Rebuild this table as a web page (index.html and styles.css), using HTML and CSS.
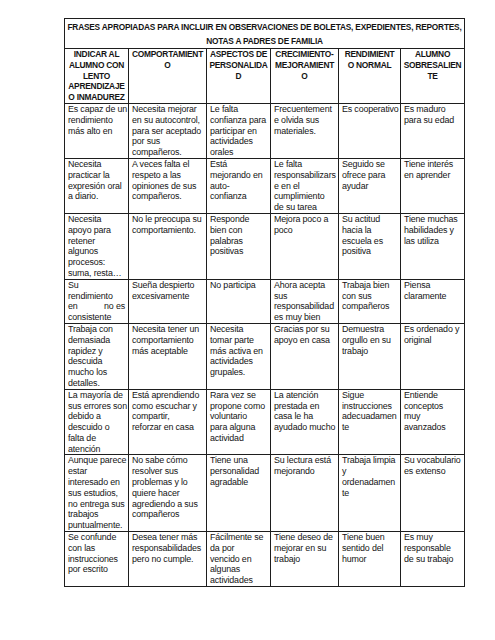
FILE: index.html
```html
<!DOCTYPE html>
<html lang="es">
<head>
<meta charset="utf-8">
<title>Frases apropiadas</title>
<link rel="stylesheet" href="styles.css">
</head>
<body>
<table class="frases">
  <colgroup>
    <col class="c1"><col class="c2"><col class="c3"><col class="c4"><col class="c5"><col class="c6">
  </colgroup>
  <thead>
    <tr class="title-row">
      <th colspan="6" class="title">FRASES APROPIADAS PARA INCLUIR EN OBSERVACIONES DE BOLETAS, EXPEDIENTES, REPORTES,<br>NOTAS A PADRES DE FAMILIA</th>
    </tr>
    <tr class="head-row">
      <th>INDICAR AL<br>ALUMNO CON<br>LENTO<br>APRENDIZAJE<br>O INMADUREZ</th>
      <th>COMPORTAMIENT<br>O</th>
      <th>ASPECTOS DE<br>PERSONALIDA<br>D</th>
      <th>CRECIMIENTO-<br>MEJORAMIENT<br>O</th>
      <th>RENDIMIENT<br>O NORMAL</th>
      <th>ALUMNO<br>SOBRESALIEN<br>TE</th>
    </tr>
  </thead>
  <tbody>
    <tr>
      <td>Es capaz de un<br>rendimiento<br>más alto en</td>
      <td>Necesita mejorar<br>en su autocontrol,<br>para ser aceptado<br>por sus<br>compañeros.</td>
      <td>Le falta<br>confianza para<br>participar en<br>actividades<br>orales</td>
      <td>Frecuentement<br>e olvida sus<br>materiales.</td>
      <td>Es cooperativo</td>
      <td>Es maduro<br>para su edad</td>
    </tr>
    <tr>
      <td>Necesita<br>practicar la<br>expresión oral<br>a diario.</td>
      <td>A veces falta el<br>respeto a las<br>opiniones de sus<br>compañeros.</td>
      <td>Está<br>mejorando en<br>auto-<br>confianza</td>
      <td>Le falta<br>responsabilizars<br>e en el<br>cumplimiento<br>de su tarea</td>
      <td>Seguido se<br>ofrece para<br>ayudar</td>
      <td>Tiene interés<br>en aprender</td>
    </tr>
    <tr>
      <td>Necesita<br>apoyo para<br>retener<br>algunos<br>procesos:<br>suma, resta…</td>
      <td>No le preocupa su<br>comportamiento.</td>
      <td>Responde<br>bien con<br>palabras<br>positivas</td>
      <td>Mejora poco a<br>poco</td>
      <td>Su actitud<br>hacia la<br>escuela es<br>positiva</td>
      <td>Tiene muchas<br>habilidades y<br>las utiliza</td>
    </tr>
    <tr>
      <td>Su<br>rendimiento<br><span class="just"><span>en</span><span>no es</span></span>consistente</td>
      <td>Sueña despierto<br>excesivamente</td>
      <td>No participa</td>
      <td>Ahora acepta<br>sus<br>responsabilidad<br>es muy bien</td>
      <td>Trabaja bien<br>con sus<br>compañeros</td>
      <td>Piensa<br>claramente</td>
    </tr>
    <tr>
      <td>Trabaja con<br>demasiada<br>rapidez y<br>descuida<br>mucho los<br>detalles.</td>
      <td>Necesita tener un<br>comportamiento<br>más aceptable</td>
      <td>Necesita<br>tomar parte<br>más activa en<br>actividades<br>grupales.</td>
      <td>Gracias por su<br>apoyo en casa</td>
      <td>Demuestra<br>orgullo en su<br>trabajo</td>
      <td>Es ordenado y<br>original</td>
    </tr>
    <tr>
      <td>La mayoría de<br>sus errores son<br>debido a<br>descuido o<br>falta de<br>atención</td>
      <td>Está aprendiendo<br>como escuchar y<br>compartir,<br>reforzar en casa</td>
      <td>Rara vez se<br>propone como<br>voluntario<br>para alguna<br>actividad</td>
      <td>La atención<br>prestada en<br>casa le ha<br>ayudado mucho</td>
      <td>Sigue<br>instrucciones<br>adecuadamen<br>te</td>
      <td>Entiende<br>conceptos<br>muy<br>avanzados</td>
    </tr>
    <tr>
      <td>Aunque parece<br>estar<br>interesado en<br>sus estudios,<br>no entrega sus<br>trabajos<br>puntualmente.</td>
      <td>No sabe cómo<br>resolver sus<br>problemas y lo<br>quiere hacer<br>agrediendo a sus<br>compañeros</td>
      <td>Tiene una<br>personalidad<br>agradable</td>
      <td>Su lectura está<br>mejorando</td>
      <td>Trabaja limpia<br>y<br>ordenadamen<br>te</td>
      <td>Su vocabulario<br>es extenso</td>
    </tr>
    <tr>
      <td>Se confunde<br>con las<br>instrucciones<br>por escrito</td>
      <td>Desea tener más<br>responsabilidades<br>pero no cumple.</td>
      <td>Fácilmente se<br>da por<br>vencido en<br>algunas<br>actividades</td>
      <td>Tiene deseo de<br>mejorar en su<br>trabajo</td>
      <td>Tiene buen<br>sentido del<br>humor</td>
      <td>Es muy<br>responsable<br>de su trabajo</td>
    </tr>
  </tbody>
</table>
</body>
</html>
```

FILE: styles.css
```css
html, body {
  margin: 0;
  padding: 0;
  background: #ffffff;
}

body {
  padding: 18px 0 0 64px;
  font-family: "Liberation Sans", Arial, sans-serif;
  color: #141414;
}

.frases {
  border-collapse: collapse;
  table-layout: fixed;
  width: 400px;
}

.c1 { width: 64px; }
.c2 { width: 78px; }
.c3 { width: 64px; }
.c4 { width: 68px; }
.c5 { width: 62px; }
.c6 { width: 64px; }

.frases th,
.frases td {
  border: 1px solid #1e1e1e;
  vertical-align: top;
  padding: 0 1px 0 3px;
  white-space: nowrap;
  overflow: hidden;
}

.frases td {
  font-size: 8.9px;
  letter-spacing: -0.15px;
  line-height: 10.8px;
  text-align: left;
}

.frases th {
  font-size: 8.4px;
  letter-spacing: -0.25px;
  line-height: 10.8px;
  font-weight: 700;
  text-align: center;
  padding: 0 1px;
}

.frases th.title {
  font-size: 8.3px;
  letter-spacing: -0.2px;
  line-height: 13.5px;
  height: 26px;
  padding: 2px 2px 0;
  text-align: center;
}

.just {
  display: flex;
  justify-content: space-between;
  padding-right: 2px;
}
```
